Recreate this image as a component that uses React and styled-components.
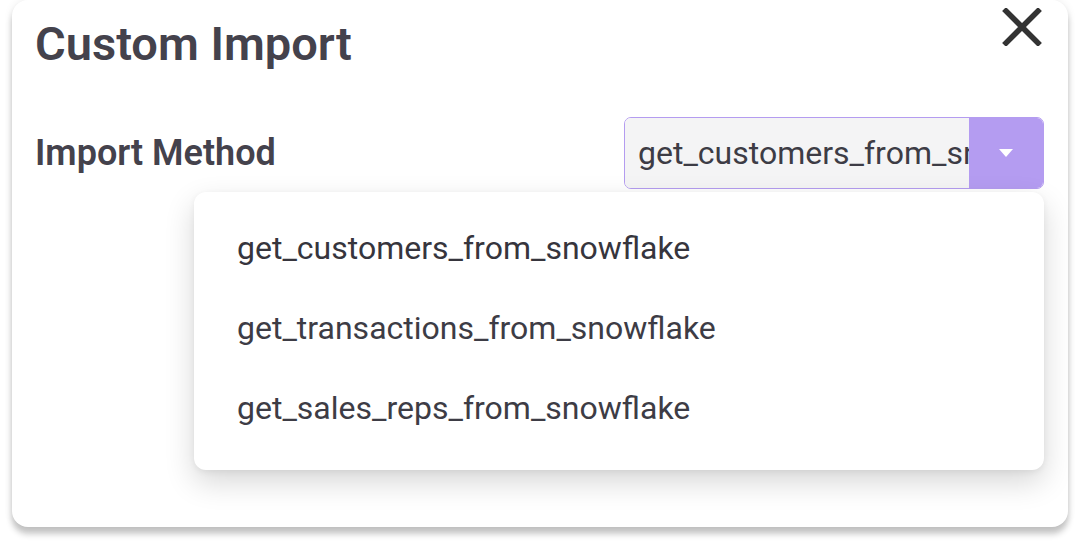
import React, { useState } from 'react'
import styled, { createGlobalStyle } from 'styled-components'

const GlobalStyle = createGlobalStyle`
    html, body {
        margin: 0;
        padding: 0;
        background: #fff;
        font-family: Roboto, "Noto Sans", "Liberation Sans", sans-serif;
    }
`;

const Page = styled.div`
    width: 1080px;
    height: 552px;
    overflow: hidden;
    background: #fff;
`;

const Card = styled.div`
    position: relative;
    box-sizing: border-box;
    margin: 0 12px;
    height: 527px;
    padding: 12px 26px 0 23px;
    background: #fff;
    border-radius: 16px;
    box-shadow: 0 7px 6px rgba(0, 0, 0, 0.22), 0 0 8px rgba(0, 0, 0, 0.08);
`;

const Header = styled.div`
    display: flex;
    justify-content: space-between;
    align-items: flex-start;
`;

const Title = styled.h1`
    margin: 0;
    font-size: 47px;
    font-weight: 600;
    line-height: 64px;
    color: #44424c;
`;

const CloseButton = styled.button`
    display: flex;
    padding: 0;
    margin-top: -4px;
    border: none;
    background: none;
    cursor: pointer;
`;

const FieldRow = styled.div`
    position: relative;
    display: flex;
    justify-content: space-between;
    align-items: center;
    margin-top: 41px;
`;

const Label = styled.label`
    font-size: 36px;
    font-weight: 600;
    color: #44424c;
`;

const Select = styled.div`
    display: flex;
    box-sizing: border-box;
    width: 420px;
    height: 72px;
    margin-right: -2px;
    border: 1.5px solid #b49cf0;
    border-radius: 7px;
    overflow: hidden;
    cursor: pointer;
`;

const SelectValue = styled.div`
    flex: 1;
    min-width: 0;
    display: flex;
    align-items: center;
    padding-left: 13px;
    background: #f4f4f5;
    font-size: 32px;
    color: #3d3c45;
    white-space: nowrap;
    overflow: hidden;
`;

const Caret = styled.div`
    width: 74px;
    flex-shrink: 0;
    display: flex;
    align-items: center;
    justify-content: center;
    background: #b49cf1;

    &::after {
        content: '';
        border-left: 7px solid transparent;
        border-right: 7px solid transparent;
        border-top: 8px solid #fff;
    }
`;

const Menu = styled.ul`
    position: absolute;
    top: calc(100% + 3px);
    right: -2px;
    width: 850px;
    margin: 0;
    padding: 16px 0 22px;
    list-style: none;
    background: #fff;
    border-radius: 12px;
    box-shadow: 0 12px 30px rgba(0, 0, 0, 0.16), 0 2px 6px rgba(0, 0, 0, 0.06);
    box-sizing: border-box;
`;

const MenuItem = styled.li`
    height: 80px;
    display: flex;
    align-items: center;
    padding-left: 43px;
    font-size: 32px;
    color: ${props => props.active ? '#36353d' : '#3d3c45'};
    cursor: pointer;
`;

const methods = [
    'get_customers_from_snowflake',
    'get_transactions_from_snowflake',
    'get_sales_reps_from_snowflake',
];

function CloseIcon() {
    return (
        <svg width="40" height="38" viewBox="0 0 40 38">
            <path d="M4 3 L36 35 M36 3 L4 35" stroke="#333" strokeWidth="5.5" strokeLinecap="square" fill="none" />
        </svg>
    );
}

export default function App() {
    const [selected, setSelected] = useState(methods[0]);
    const [isOpen, setOpen] = useState(true);

    return (
        <Page>
            <GlobalStyle />
            <Card>
                <Header>
                    <Title>Custom Import</Title>
                    <CloseButton aria-label="Close">
                        <CloseIcon />
                    </CloseButton>
                </Header>
                <FieldRow>
                    <Label>Import Method</Label>
                    <Select onClick={() => setOpen(!isOpen)}>
                        <SelectValue>{selected}</SelectValue>
                        <Caret />
                    </Select>
                    {isOpen && (
                        <Menu>
                            {methods.map(m => (
                                <MenuItem key={m} active={m === selected} onClick={() => { setSelected(m); setOpen(false); }}>
                                    {m}
                                </MenuItem>
                            ))}
                        </Menu>
                    )}
                </FieldRow>
            </Card>
        </Page>
    );
}
